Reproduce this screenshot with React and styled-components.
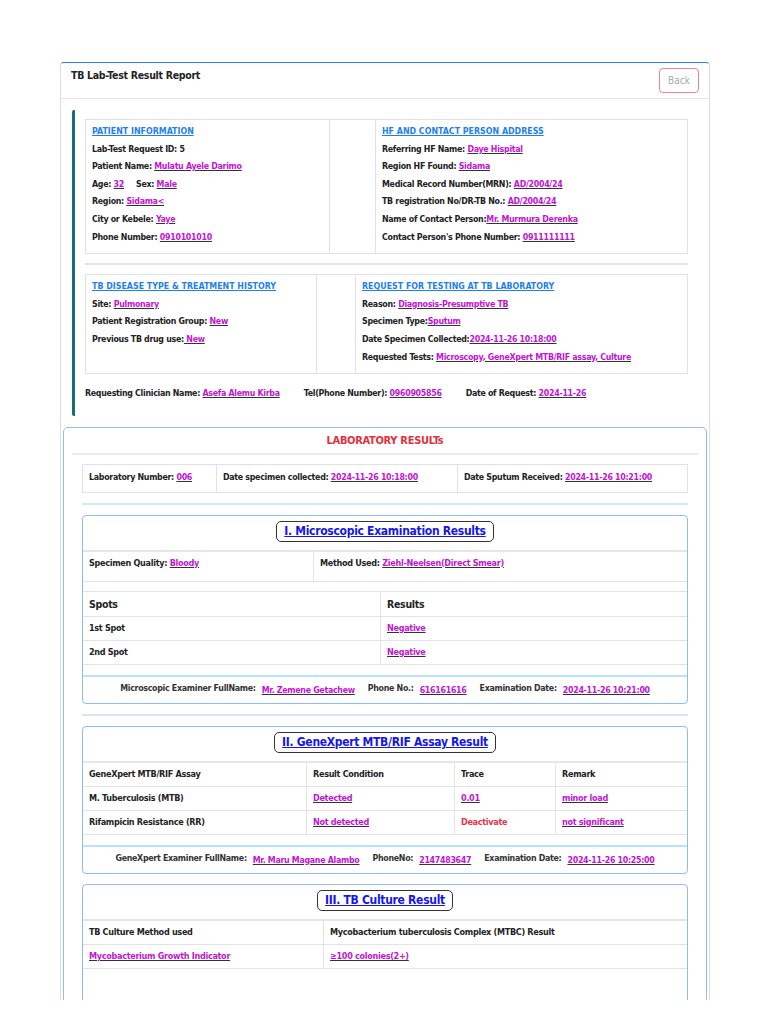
import React from "react";
import styled, { createGlobalStyle } from "styled-components";

const GlobalStyle = createGlobalStyle`
  body {
    margin: 0;
    background: #fff;
    font-family: "Liberation Sans Narrow", "DejaVu Sans Condensed", "Liberation Sans", sans-serif;
    letter-spacing: -0.3px;
    color: #222;
  }
`;

const Viewport = styled.div`
  height: 1000px;
  overflow: hidden;
`;

const Page = styled.div`
  padding: 62px 58px 0 60px;
`;

const Card = styled.div`
  border: 1px solid #dcdcdc;
  border-top-color: #2f80f5;
  border-radius: 4px;
  background: #fff;
  padding-bottom: 40px;
`;

const Header = styled.div`
  display: flex;
  justify-content: space-between;
  align-items: flex-start;
  padding: 5px 10px;
  border-bottom: 1px solid #e6e6e6;
`;

const Title = styled.div`
  font-size: 10.5px;
  font-weight: 700;
  line-height: 13px;
  padding-top: 1px;
  color: #222;
`;

const BackButton = styled.button`
  width: 40px;
  height: 25px;
  border: 1px solid #f0868c;
  border-radius: 4px;
  background: #fff;
  color: #a8a8a8;
  font-family: inherit;
  font-size: 10px;
  padding: 0;
`;

const PatientSection = styled.div`
  margin: 11px 21px 0 11px;
  border-left: 3px solid #176d79;
  border-radius: 2px;
  padding: 9px 0 13px 10px;
`;

const InfoTable = styled.div`
  display: grid;
  grid-template-columns: ${(p) => p.cols};
  border: 1px solid #dfe2e6;
`;

const InfoCell = styled.div`
  padding: 3px 6px 7px;
  border-right: 1px solid #dfe2e6;
  &:last-child {
    border-right: none;
  }
`;

const Line = styled.div`
  font-size: 8.8px;
  line-height: 17.6px;
  white-space: nowrap;
`;

const SectionHeading = styled.div`
  font-size: 8.8px;
  line-height: 17.6px;
  font-weight: 700;
  letter-spacing: 0;
  color: #1f7fee;
  text-decoration: underline;
  text-transform: uppercase;
`;

const Label = styled.span`
  font-weight: 700;
  color: #222;
`;

const Value = styled.span`
  font-weight: 700;
  color: ${(p) => (p.$plain ? "#222" : p.$red ? "#e8334a" : "#c214d6")};
  text-decoration: ${(p) => (p.$plain || p.$red ? "none" : "underline")};
  text-decoration-color: #333;
  text-underline-offset: 1px;
`;

const Divider = styled.div`
  height: 2px;
  background: ${(p) => p.$color || "#e4e4e4"};
  margin: ${(p) => p.$m || "10px"} 0;
`;

const ClinicianRow = styled.div`
  display: flex;
  gap: 24px;
  margin-top: 11px;
  font-size: 8.8px;
  line-height: 17.5px;
  white-space: nowrap;
`;

const LabCard = styled.div`
  margin: 11px 2px 0;
  border: 1px solid #8fbdf5;
  border-radius: 5px;
  padding: 0 18px 30px;
`;

const LabTitle = styled.div`
  margin: 0 -10px;
  padding: 6px 0;
  line-height: 13px;
  text-align: center;
  color: #e3303f;
  font-weight: 700;
  font-size: 11px;
  border-bottom: 2px solid #ececec;
`;

const LabInfo = styled.div`
  display: grid;
  grid-template-columns: 134px 241px 1fr;
  margin-top: 9px;
  border: 1px solid #dfe2e6;
`;

const LabInfoCell = styled.div`
  padding: 5px 6px 8px;
  font-size: 8.8px;
  line-height: 14px;
  white-space: nowrap;
  border-right: 1px solid #dfe2e6;
  &:last-child {
    border-right: none;
  }
`;

const ResultCard = styled.div`
  border: 1px solid #8dbcf6;
  border-radius: 4px;
  margin-top: ${(p) => (p.$spaced ? "10px" : "0")};
  min-height: ${(p) => p.$minHeight || "auto"};
`;

const TitleRow = styled.div`
  text-align: center;
  padding: 4px 0 8px;
  border-bottom: 2px solid #e6e6e6;
`;

const TitleBox = styled.span`
  display: inline-block;
  border: 1px solid #333;
  border-radius: 5px;
  padding: 2px 7px;
  line-height: 15px;
  font-size: 12px;
  font-weight: 700;
  color: #1616ec;
  text-decoration: underline;
`;

const Row = styled.div`
  display: grid;
  grid-template-columns: ${(p) => p.cols};
  border-bottom: 1px solid #e3e3e3;
  border-top: ${(p) => (p.$top ? "1px solid #e3e3e3" : "none")};
  margin-top: ${(p) => (p.$gap ? "9px" : "0")};
`;

const Cell = styled.div`
  display: flex;
  align-items: ${(p) => (p.$top ? "flex-start" : "center")};
  height: ${(p) => p.$h || "23px"};
  padding: ${(p) => (p.$top ? "6px 6px 0" : "0 6px")};
  box-sizing: border-box;
  font-size: ${(p) => (p.$big ? "10.5px" : "9px")};
  font-weight: ${(p) => (p.$bold ? 700 : 400)};
  border-right: 1px solid #e3e3e3;
  white-space: nowrap;
  &:last-child {
    border-right: none;
  }
`;

const Footer = styled.div`
  display: flex;
  justify-content: center;
  align-items: baseline;
  margin-top: 10px;
  padding: 5px 0 9px;
  border-top: 2px solid #b8e3f8;
  font-size: 8.8px;
  line-height: 12px;
  white-space: nowrap;
`;

const FootItem = styled.span`
  margin-right: 13px;
  &:last-child {
    margin-right: 0;
  }
`;

const FootLabel = styled.span`
  font-weight: 700;
  color: #333;
  margin-right: 6px;
`;

const FootValue = styled(Value)`
  display: inline-block;
  transform: translateY(2px);
`;

const Field = ({ label, value, gap = " " }) => (
  <Line>
    <Label>{label}{gap}</Label>
    <Value>{value}</Value>
  </Line>
);

const FooterBar = ({ items }) => (
  <Footer>
    {items.map(([l, v]) => (
      <FootItem key={l}>
        <FootLabel>{l}</FootLabel>
        <FootValue>{v}</FootValue>
      </FootItem>
    ))}
  </Footer>
);

export default function App() {
  return (
    <Viewport>
      <GlobalStyle />
      <Page>
        <Card>
          <Header>
            <Title>TB Lab-Test Result Report</Title>
            <BackButton>Back</BackButton>
          </Header>

          <PatientSection>
            <InfoTable cols="244px 46px 1fr">
              <InfoCell>
                <SectionHeading>Patient Information</SectionHeading>
                <Line><Label>Lab-Test Request ID: </Label><Value $plain>5</Value></Line>
                <Field label="Patient Name:" value="Mulatu Ayele Darimo" />
                <Line>
                  <Label>Age: </Label><Value>32</Value>
                  <Label style={{ marginLeft: 12 }}>Sex: </Label><Value>Male</Value>
                </Line>
                <Field label="Region:" value="Sidama<" />
                <Field label="City or Kebele:" value="Yaye" />
                <Field label="Phone Number:" value="0910101010" />
              </InfoCell>
              <InfoCell />
              <InfoCell>
                <SectionHeading>HF and Contact Person Address</SectionHeading>
                <Field label="Referring HF Name:" value="Daye Hispital" />
                <Field label="Region HF Found:" value="Sidama" />
                <Field label="Medical Record Number(MRN):" value="AD/2004/24" />
                <Field label="TB registration No/DR-TB No.:" value="AD/2004/24" />
                <Field label="Name of Contact Person:" value="Mr. Murmura Derenka" gap="" />
                <Field label="Contact Person's Phone Number:" value="0911111111" />
              </InfoCell>
            </InfoTable>

            <Divider $m="9px" />

            <InfoTable cols="231px 39px 1fr">
              <InfoCell>
                <SectionHeading>TB Disease Type &amp; Treatment History</SectionHeading>
                <Field label="Site:" value="Pulmonary" />
                <Field label="Patient Registration Group:" value="New" />
                <Field label="Previous TB drug use:" value=" New" gap="" />
              </InfoCell>
              <InfoCell />
              <InfoCell>
                <SectionHeading>Request for Testing at TB Laboratory</SectionHeading>
                <Field label="Reason:" value="Diagnosis-Presumptive TB" />
                <Field label="Specimen Type:" value="Sputum" gap="" />
                <Field label="Date Specimen Collected:" value="2024-11-26 10:18:00" gap="" />
                <Field label="Requested Tests:" value="Microscopy, GeneXpert MTB/RIF assay, Culture" />
              </InfoCell>
            </InfoTable>

            <ClinicianRow>
              <span><Label>Requesting Clinician Name: </Label><Value>Asefa Alemu Kirba</Value></span>
              <span><Label>Tel(Phone Number): </Label><Value>0960905856</Value></span>
              <span><Label>Date of Request: </Label><Value>2024-11-26</Value></span>
            </ClinicianRow>
          </PatientSection>

          <LabCard>
            <LabTitle>LABORATORY RESULTs</LabTitle>
            <LabInfo>
              <LabInfoCell><Label>Laboratory Number: </Label><Value>006</Value></LabInfoCell>
              <LabInfoCell><Label>Date specimen collected: </Label><Value>2024-11-26 10:18:00</Value></LabInfoCell>
              <LabInfoCell><Label>Date Sputum Received: </Label><Value>2024-11-26 10:21:00</Value></LabInfoCell>
            </LabInfo>

            <Divider $color="#d3e6fb" />

            <ResultCard>
              <TitleRow><TitleBox>I. Microscopic Examination Results</TitleBox></TitleRow>
              <Row cols="231px 1fr">
                <Cell $top $h="29px"><Label>Specimen Quality:&nbsp;</Label><Value>Bloody</Value></Cell>
                <Cell $top $h="29px"><Label>Method Used:&nbsp;</Label><Value>Ziehl-Neelsen(Direct Smear)</Value></Cell>
              </Row>
              <Row cols="298px 1fr" $gap $top>
                <Cell $h="24px" $big $bold>Spots</Cell>
                <Cell $h="24px" $big $bold>Results</Cell>
              </Row>
              <Row cols="298px 1fr">
                <Cell $bold>1st Spot</Cell>
                <Cell><Value>Negative</Value></Cell>
              </Row>
              <Row cols="298px 1fr">
                <Cell $bold>2nd Spot</Cell>
                <Cell><Value>Negative</Value></Cell>
              </Row>
              <FooterBar
                items={[
                  ["Microscopic Examiner FullName:", "Mr. Zemene Getachew"],
                  ["Phone No.:", "616161616"],
                  ["Examination Date:", "2024-11-26 10:21:00"],
                ]}
              />
            </ResultCard>

            <Divider $color="#d3e6fb" />

            <ResultCard>
              <TitleRow><TitleBox>II. GeneXpert MTB/RIF Assay Result</TitleBox></TitleRow>
              <Row cols="224px 148px 101px 1fr">
                <Cell $bold>GeneXpert MTB/RIF Assay</Cell>
                <Cell $bold>Result Condition</Cell>
                <Cell $bold>Trace</Cell>
                <Cell $bold>Remark</Cell>
              </Row>
              <Row cols="224px 148px 101px 1fr">
                <Cell $bold>M. Tuberculosis (MTB)</Cell>
                <Cell><Value>Detected</Value></Cell>
                <Cell><Value>0.01</Value></Cell>
                <Cell><Value>minor load</Value></Cell>
              </Row>
              <Row cols="224px 148px 101px 1fr">
                <Cell $bold>Rifampicin Resistance (RR)</Cell>
                <Cell><Value>Not detected</Value></Cell>
                <Cell><Value $red>Deactivate</Value></Cell>
                <Cell><Value>not significant</Value></Cell>
              </Row>
              <FooterBar
                items={[
                  ["GeneXpert Examiner FullName:", "Mr. Maru Magane Alambo"],
                  ["PhoneNo:", "2147483647"],
                  ["Examination Date:", "2024-11-26 10:25:00"],
                ]}
              />
            </ResultCard>

            <ResultCard $spaced $minHeight="160px">
              <TitleRow><TitleBox>III. TB Culture Result</TitleBox></TitleRow>
              <Row cols="241px 1fr">
                <Cell $bold>TB Culture Method used</Cell>
                <Cell $bold>Mycobacterium tuberculosis Complex (MTBC) Result</Cell>
              </Row>
              <Row cols="241px 1fr">
                <Cell><Value>Mycobacterium Growth Indicator</Value></Cell>
                <Cell><Value>≥100 colonies(2+)</Value></Cell>
              </Row>
            </ResultCard>
          </LabCard>
        </Card>
      </Page>
    </Viewport>
  );
}
